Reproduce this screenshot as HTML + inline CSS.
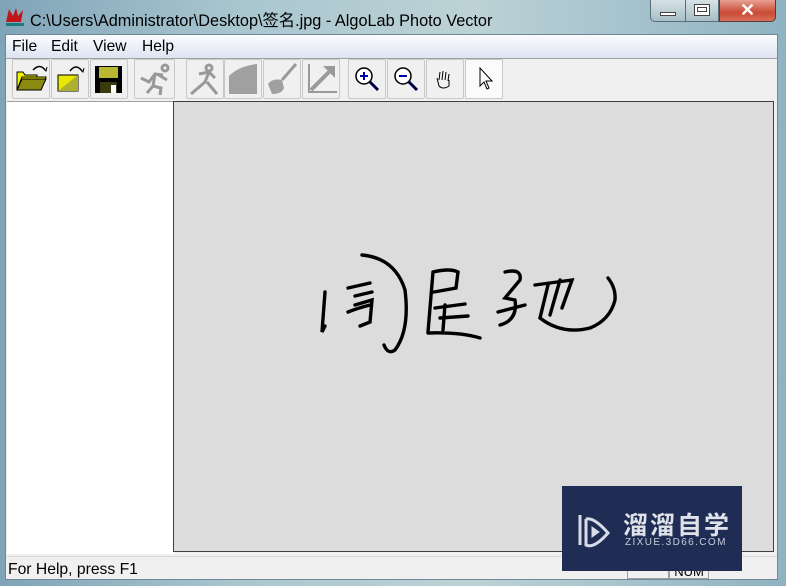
<!DOCTYPE html>
<html><head><meta charset="utf-8"><style>
*{margin:0;padding:0;box-sizing:border-box}
body{width:786px;height:586px;overflow:hidden;position:relative;font-family:"Liberation Sans","Noto Sans CJK SC",sans-serif;background:linear-gradient(90deg,#7fa4b8,#a9c6cf 30%,#bcd2d6 60%,#8fb3c3);}
.abs{position:absolute}
.title{left:30px;top:7px;font-size:16.3px;color:#000;}
.btn{position:absolute;top:59px;width:38px;height:40px;border:1px solid #c8c8c8;border-radius:2px;background:#f0f0f0}
</style></head><body>
<svg class="abs" style="left:4px;top:6px" width="22" height="22"><path d="M2 16 L5 3 L9 10 L12 2 L14 10 L19 4 L17 16Z" fill="#c0161b"/><rect x="2" y="17" width="18" height="3" fill="#1e7a7a"/></svg>
<div class="abs title">C:\Users\Administrator\Desktop\签名.jpg - AlgoLab Photo Vector</div>
<div class="abs" style="left:650px;top:0;width:36px;height:22px;background:linear-gradient(#d6e2e6,#a7bec6);border:1px solid #5a6e78;border-top:none;border-radius:0 0 0 5px"></div>
<div class="abs" style="left:660px;top:12px;width:16px;height:4px;background:#fff;border:1px solid #444"></div>
<div class="abs" style="left:686px;top:0;width:33px;height:22px;background:linear-gradient(#d6e2e6,#a7bec6);border:1px solid #5a6e78;border-top:none;border-left:none"></div>
<div class="abs" style="left:694px;top:4px;width:16px;height:12px;background:#fff;border:1px solid #444"><div style="margin:2px;height:5px;border:1px solid #444"></div></div>
<div class="abs" style="left:719px;top:0;width:57px;height:22px;background:linear-gradient(#e8a093,#c84a34 60%,#d8705a);border:1px solid #5a3a34;border-top:none;border-radius:0 0 5px 0;color:#fff;font-weight:bold;font-size:18px;text-align:center;line-height:20px">✕</div>
<div class="abs" style="left:5px;top:34px;width:773px;height:546px;background:#f0f0f0;border:1px solid #6e8894"></div>
<div class="abs" style="left:6px;top:35px;width:771px;height:24px;background:linear-gradient(#fbfcfe,#dde4f2);border-bottom:1px solid #a0a0a0;font-size:15.6px;line-height:23px">
<span style="position:absolute;left:6px">File</span><span style="position:absolute;left:45px">Edit</span><span style="position:absolute;left:87px">View</span><span style="position:absolute;left:136px">Help</span></div>
<div class="btn" style="left:12px"><svg width="36" height="38"><path d="M4 30 L9 17 L33 17 L28 30Z M4 30 L4 12 L10 12 L12 15 L24 15 L24 17" fill="#f2f200" stroke="#000"/><path d="M4 30 L9 19 L33 19 L28 30Z" fill="#8a8a10" stroke="#000"/><path d="M20 10 Q27 3 32 10" fill="none" stroke="#000" stroke-width="1.5"/><path d="M30 8 L33 11 L34 7" fill="none" stroke="#000"/></svg></div>
<div class="btn" style="left:51px"><svg width="36" height="38"><rect x="6" y="15" width="20" height="16" fill="#e8e800" stroke="#000"/><path d="M26 15 L26 31 L6 31Z" fill="#b0b030"/><path d="M18 11 Q24 3 30 11" fill="none" stroke="#000" stroke-width="1.5"/><path d="M28 9 L31 12 L32 8" fill="none" stroke="#000"/></svg></div>
<div class="btn" style="left:90px"><svg width="36" height="38"><rect x="4" y="6" width="27" height="27" fill="#000"/><rect x="8" y="7" width="19" height="11" fill="#b8b830"/><rect x="9" y="22" width="17" height="11" fill="#3a3a10"/><rect x="20" y="25" width="5" height="8" fill="#fff"/></svg></div>
<div class="btn" style="left:134px;width:41px"><svg width="40" height="38" stroke="#999" stroke-width="3" fill="none"><circle cx="30" cy="8" r="3"/><path d="M6 18 L14 22 L20 14 L28 15 M20 14 L18 26 L12 33 M18 26 L26 28 L25 35 M22 14 L32 20"/></svg></div>
<div class="btn" style="left:186px"><svg width="36" height="38" stroke="#999" stroke-width="3" fill="none"><circle cx="22" cy="8" r="3"/><path d="M4 34 L18 22 L22 12 L28 18 M20 22 L30 34 M12 14 L22 12"/></svg></div>
<div class="btn" style="left:224px"><svg width="36" height="38"><path d="M4 34 L4 16 Q14 6 32 4 L32 34Z" fill="#a0a0a0"/></svg></div>
<div class="btn" style="left:263px"><svg width="36" height="38"><path d="M32 4 L18 20" stroke="#999" stroke-width="3"/><path d="M4 24 Q8 18 18 20 L20 28 Q18 34 8 34 Z" fill="#a0a0a0"/></svg></div>
<div class="btn" style="left:302px"><svg width="36" height="38"><path d="M6 4 L6 32 L34 32" stroke="#999" stroke-width="2" fill="none"/><path d="M8 30 L26 12" stroke="#999" stroke-width="4"/><path d="M20 6 L32 6 L32 18Z" fill="#999"/></svg></div>
<div class="btn" style="left:348px"><svg width="36" height="38"><circle cx="15" cy="16" r="8" fill="#fff" stroke="#000" stroke-width="1.5"/><path d="M11 16 H19 M15 12 V20" stroke="#00a" stroke-width="2"/><path d="M21 22 L29 30" stroke="#004" stroke-width="3"/></svg></div>
<div class="btn" style="left:387px"><svg width="36" height="38"><circle cx="15" cy="16" r="8" fill="#fff" stroke="#000" stroke-width="1.5"/><path d="M11 16 H19" stroke="#00a" stroke-width="2"/><path d="M21 22 L29 30" stroke="#004" stroke-width="3"/></svg></div>
<div class="btn" style="left:426px"><svg width="36" height="38" fill="none" stroke="#000"><path d="M12 26 L10 18 M12 20 L13 12 M15 20 L16 11 M18 20 L19 12 M21 21 L22 14 M12 26 Q16 30 22 26 L22 20"/></svg></div>
<div class="btn" style="left:465px;background:#fbfbfb"><svg width="36" height="38"><path d="M14 8 L14 26 L18 22 L21 29 L23 28 L20 21 L26 21Z" fill="#fff" stroke="#000"/></svg></div>
<div class="abs" style="left:7px;top:101px;width:167px;height:453px;background:#fff;border-top:1px solid #a0a0a0"></div>
<div class="abs" style="left:173px;top:101px;width:601px;height:451px;background:#dcdcdc;border:1px solid #404040"></div>
<svg class="abs" style="left:300px;top:250px" width="330" height="110" fill="none" stroke="#000" stroke-width="3.4" stroke-linecap="round">
<path d="M25 42 L22 82 L25 76"/>
<path d="M62 5 Q95 8 105 40 Q110 80 95 100 Q88 105 84 95"/>
<path d="M48 38 L70 33 M55 46 L72 42 M55 55 L72 50 L70 72 L60 76 M48 62 Q58 58 70 55"/>
<path d="M133 22 L128 82 M133 22 Q150 18 158 22 L156 38 L134 42 M135 58 L165 54 M140 68 L168 66 M145 55 L143 80 M128 83 Q160 82 180 88"/>
<path d="M205 22 Q222 18 220 30 L205 48 L215 50 M198 62 L225 55 M215 50 Q218 70 200 75"/>
<path d="M235 35 L272 30 L262 58 M248 35 L240 68 Q262 85 290 78 Q310 70 315 50 Q316 38 308 28 M260 30 L250 65"/>
</svg>
<div class="abs" style="left:6px;top:556px;width:771px;height:23px;background:#f0f0f0;border-top:1px solid #d8d8d8;font-size:15.7px;line-height:26px;padding-left:2px">For Help, press F1</div>
<div class="abs" style="left:627px;top:558px;width:42px;height:21px;border:1px solid #a0a0a0"></div>
<div class="abs" style="left:669px;top:558px;width:40px;height:21px;border:1px solid #a0a0a0;font-size:13px;text-align:center;line-height:26px">NUM</div>
<div class="abs" style="left:562px;top:486px;width:180px;height:85px;background:#1f2d55"></div>
<svg class="abs" style="left:574px;top:511px" width="40" height="40" fill="none" stroke="#d8dce6" stroke-width="3"><path d="M6 4 L6 34 M12 8 L12 34 Q20 38 34 22 Q20 6 12 8"/><path d="M18 16 L25 21 L18 26Z" fill="#d8dce6" stroke-width="1"/></svg>
<div class="abs" style="left:623px;top:506px;font-size:25px;color:#e0e2ea;letter-spacing:2px;font-weight:600">溜溜自学</div>
<div class="abs" style="left:625px;top:537px;font-size:10px;color:#c8ccd8;letter-spacing:1.4px">ZIXUE.3D66.COM</div>
</body></html>
